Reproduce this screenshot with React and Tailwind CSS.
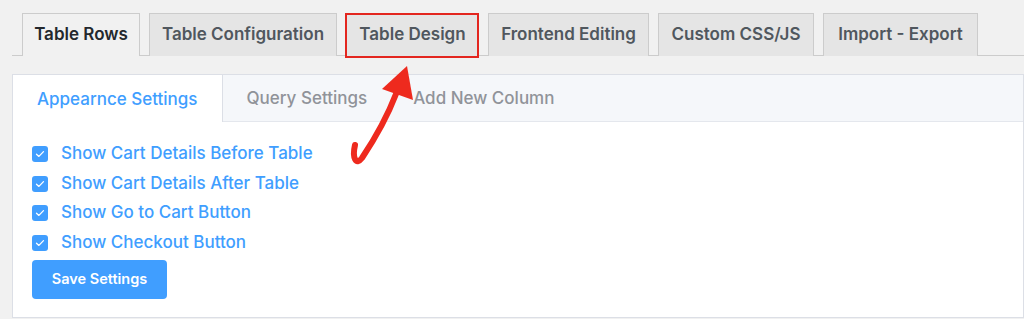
import React from "react";

const tabs = [
  { label: "Table Rows", active: true, w: "w-[118px]" },
  { label: "Table Configuration", w: "w-[188px]" },
  { label: "Table Design", marked: true, w: "w-[133px]" },
  { label: "Frontend Editing", w: "w-[161px]" },
  { label: "Custom CSS/JS", w: "w-[156px]" },
  { label: "Import - Export", w: "w-[155px]" },
];

const checks = [
  "Show Cart Details Before Table",
  "Show Cart Details After Table",
  "Show Go to Cart Button",
  "Show Checkout Button",
];

function Check() {
  return (
    <span className="flex h-[16px] w-[16px] items-center justify-center rounded-[3px] bg-[#409eff]">
      <svg width="10" height="8" viewBox="0 0 10 8" fill="none">
        <path d="M1.5 4.2 L3.9 6.4 L8.5 1.6" stroke="white" strokeWidth="1.3" strokeLinecap="round" strokeLinejoin="round" />
      </svg>
    </span>
  );
}

export default function App() {
  return (
    <div
      className="relative h-[319px] w-[1024px] overflow-hidden bg-[#f1f1f1]"
      style={{ fontFamily: "Inter, 'Liberation Sans', sans-serif" }}
    >
      <div className="ml-[12px] flex items-end gap-[9px] border-b border-[#cccccc] pl-[10px] pt-[13px]">
        {tabs.map((t) => (
          <div
            key={t.label}
            className={
              "relative -mb-px flex h-[43px] shrink-0 items-center justify-center whitespace-nowrap border border-b-0 border-[#cccccc] text-[17px] font-semibold " +
              t.w +
              " " +
              (t.active ? "bg-[#f1f1f1] text-[#23282d]" : "bg-[#e5e5e5] text-[#50575e]")
            }
          >
            {t.label}
            {t.marked && (
              <span className="absolute -left-[2px] -right-[1px] -top-[1px] bottom-[-2px] border-2 border-[#e3261f]" />
            )}
          </div>
        ))}
      </div>

      <div className="ml-[12px] mt-[18px] h-[244px] border border-[#dcdfe6] bg-white">
        <div className="flex h-[47px] border-b border-[#e4e7ed] bg-[#f5f7fa] text-[17px] font-medium">
          <div className="-mb-px flex items-center border-r border-[#dcdfe6] bg-white px-[24px] pt-[2px] text-[#409eff]">
            Appearnce Settings
          </div>
          <div className="flex items-center px-[24px] pt-[2px] text-[#909399]">Query Settings</div>
          <div className="flex items-center px-[22px] pt-[2px] text-[#909399]">Add New Column</div>
        </div>
        <div className="px-[19px] pt-[17px]">
          {checks.map((c) => (
            <div key={c} className="flex h-[29.7px] items-center gap-[13px]">
              <Check />
              <span className="text-[17px] font-medium text-[#409eff]">{c}</span>
            </div>
          ))}
          <button className="mt-[2px] flex h-[39px] w-[135px] items-center justify-center rounded-[4px] bg-[#409eff] text-[14.5px] font-semibold text-white">
            Save Settings
          </button>
        </div>
      </div>

      <svg className="absolute left-0 top-0" width="1024" height="319" viewBox="0 0 1024 319">
        <path
          d="M355 145 C352 158 356 166 362 158 C374 140 386 120 396 94"
          stroke="#ee2a1e"
          strokeWidth="6"
          fill="none"
          strokeLinecap="round"
        />
        <polygon points="407,66 382,89 413,100" fill="#ee2a1e" />
      </svg>
    </div>
  );
}
